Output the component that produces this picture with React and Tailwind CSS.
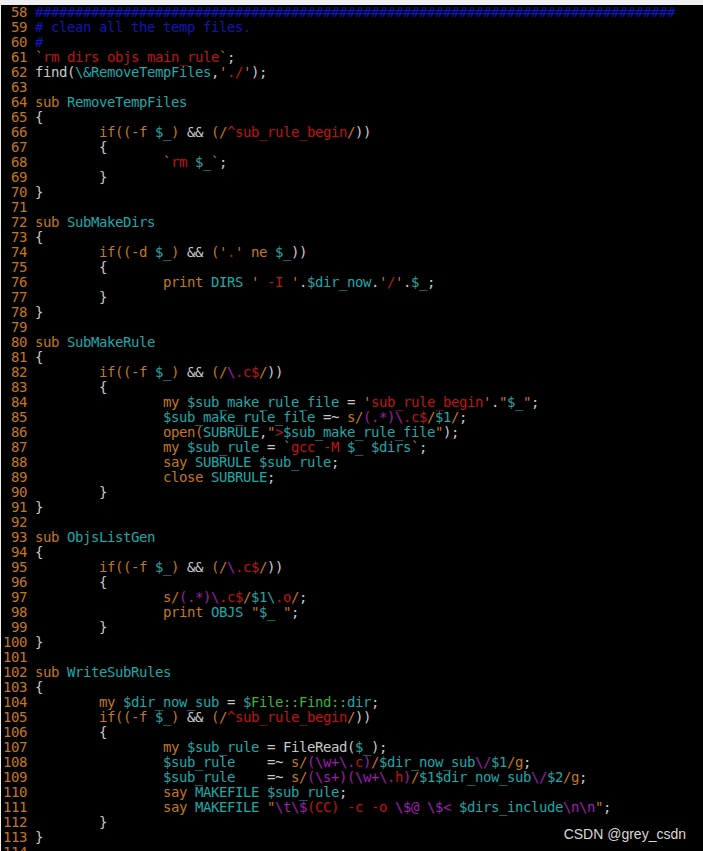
import React from "react";

const C = {
  o: "text-[#c4781c]",
  t: "text-[#1fa8a8]",
  r: "text-[#c01414]",
  b: "text-[#1414bc]",
  p: "text-[#a21cb4]",
  w: "text-[#c8c8c8]",
  g: "text-[#3cb33c]",
};

const T1 = "        ";
const T2 = "                ";

const lines = [
  [["b", "#".repeat(80)]],
  [["b", "# clean all the temp files."]],
  [["b", "#"]],
  [["o", "`"], ["r", "rm dirs objs main_rule"], ["o", "`"], ["w", ";"]],
  [["w", "find("], ["t", "\\&RemoveTempFiles"], ["w", ","], ["o", "'"], ["r", "./"], ["o", "'"], ["w", ");"]],
  [],
  [["o", "sub "], ["t", "RemoveTempFiles"]],
  [["w", "{"]],
  [["w", T1], ["o", "if((-f "], ["t", "$_"], ["o", ")"], ["w", " && "], ["o", "(/"], ["r", "^sub_rule_begin"], ["o", "/"], ["w", "))"]],
  [["w", T1 + "{"]],
  [["w", T2], ["o", "`"], ["r", "rm "], ["t", "$_"], ["o", "`"], ["w", ";"]],
  [["w", T1 + "}"]],
  [["w", "}"]],
  [],
  [["o", "sub "], ["t", "SubMakeDirs"]],
  [["w", "{"]],
  [["w", T1], ["o", "if((-d "], ["t", "$_"], ["o", ")"], ["w", " && "], ["o", "('"], ["r", "."], ["o", "' ne "], ["t", "$_"], ["w", "))"]],
  [["w", T1 + "{"]],
  [["w", T2], ["o", "print "], ["t", "DIRS "], ["o", "'"], ["r", " -I "], ["o", "'"], ["w", "."], ["t", "$dir_now"], ["w", "."], ["o", "'"], ["r", "/"], ["o", "'"], ["w", "."], ["t", "$_"], ["w", ";"]],
  [["w", T1 + "}"]],
  [["w", "}"]],
  [],
  [["o", "sub "], ["t", "SubMakeRule"]],
  [["w", "{"]],
  [["w", T1], ["o", "if((-f "], ["t", "$_"], ["o", ")"], ["w", " && "], ["o", "(/"], ["p", "\\"], ["r", ".c$"], ["o", "/"], ["w", "))"]],
  [["w", T1 + "{"]],
  [["w", T2], ["o", "my "], ["t", "$sub_make_rule_file"], ["w", " = "], ["o", "'"], ["r", "sub_rule_begin"], ["o", "'"], ["w", "."], ["o", "\""], ["t", "$_"], ["o", "\""], ["w", ";"]],
  [["w", T2], ["t", "$sub_make_rule_file"], ["w", " =~ "], ["o", "s/"], ["p", "(.*)\\"], ["r", ".c$"], ["o", "/"], ["t", "$1"], ["o", "/"], ["w", ";"]],
  [["w", T2], ["o", "open("], ["t", "SUBRULE"], ["w", ","], ["o", "\""], ["r", ">"], ["t", "$sub_make_rule_file"], ["o", "\""], ["w", ");"]],
  [["w", T2], ["o", "my "], ["t", "$sub_rule"], ["w", " = "], ["o", "`"], ["r", "gcc -M "], ["t", "$_ $dirs"], ["o", "`"], ["w", ";"]],
  [["w", T2], ["o", "say "], ["t", "SUBRULE $sub_rule"], ["w", ";"]],
  [["w", T2], ["o", "close "], ["t", "SUBRULE"], ["w", ";"]],
  [["w", T1 + "}"]],
  [["w", "}"]],
  [],
  [["o", "sub "], ["t", "ObjsListGen"]],
  [["w", "{"]],
  [["w", T1], ["o", "if((-f "], ["t", "$_"], ["o", ")"], ["w", " && "], ["o", "(/"], ["p", "\\"], ["r", ".c$"], ["o", "/"], ["w", "))"]],
  [["w", T1 + "{"]],
  [["w", T2], ["o", "s/"], ["p", "(.*)\\"], ["r", ".c$"], ["o", "/"], ["t", "$1\\"], ["r", ".o"], ["o", "/"], ["w", ";"]],
  [["w", T2], ["o", "print "], ["t", "OBJS "], ["o", "\""], ["t", "$_"], ["r", " "], ["o", "\""], ["w", ";"]],
  [["w", T1 + "}"]],
  [["w", "}"]],
  [],
  [["o", "sub "], ["t", "WriteSubRules"]],
  [["w", "{"]],
  [["w", T1], ["o", "my "], ["t", "$dir_now_sub"], ["w", " = "], ["t", "$"], ["g", "File::Find::"], ["t", "dir"], ["w", ";"]],
  [["w", T1], ["o", "if((-f "], ["t", "$_"], ["o", ")"], ["w", " && "], ["o", "(/"], ["r", "^sub_rule_begin"], ["o", "/"], ["w", "))"]],
  [["w", T1 + "{"]],
  [["w", T2], ["o", "my "], ["t", "$sub_rule"], ["w", " = FileRead("], ["t", "$_"], ["w", ");"]],
  [["w", T2], ["t", "$sub_rule"], ["w", "    =~ "], ["o", "s/"], ["p", "(\\w+\\."], ["r", "c"], ["p", ")"], ["o", "/"], ["t", "$dir_now_sub"], ["p", "\\/"], ["t", "$1"], ["o", "/g"], ["w", ";"]],
  [["w", T2], ["t", "$sub_rule"], ["w", "    =~ "], ["o", "s/"], ["p", "(\\s+)(\\w+\\."], ["r", "h"], ["p", ")"], ["o", "/"], ["t", "$1$dir_now_sub"], ["p", "\\/"], ["t", "$2"], ["o", "/g"], ["w", ";"]],
  [["w", T2], ["o", "say "], ["t", "MAKEFILE $sub_rule"], ["w", ";"]],
  [["w", T2], ["o", "say "], ["t", "MAKEFILE "], ["o", "\""], ["p", "\\t\\$"], ["r", "(CC) -c -o "], ["p", "\\$@"], ["r", " "], ["p", "\\$<"], ["t", " $dirs_include"], ["p", "\\n\\n"], ["o", "\""], ["w", ";"]],
  [["w", T1 + "}"]],
  [["w", "}"]],
  [],
];

export default function App() {
  return (
    <div className="relative w-[703px] h-[851px] overflow-hidden bg-[#efefef] pt-[5px] pl-px">
      <div
        className="h-full bg-black pl-[2px] text-[14px] tracking-[-0.43px] leading-[15px] whitespace-pre"
        style={{ fontFamily: '"DejaVu Sans Mono", "Liberation Mono", monospace' }}
      >
        {lines.map((segs, i) => (
          <div key={i} className="h-[15px]">
            <span className="text-[#c4781c]">{String(58 + i).padStart(3, " ") + " "}</span>
            {segs.map(([c, t], j) => (
              <span key={j} className={C[c]}>
                {t}
              </span>
            ))}
          </div>
        ))}
      </div>
      <div
        className="absolute right-[17px] bottom-[8px] text-[14px] leading-[18px] text-[#d8d8d8]"
        style={{ fontFamily: '"Liberation Sans", Arial, sans-serif' }}
      >
        CSDN @grey_csdn
      </div>
    </div>
  );
}
